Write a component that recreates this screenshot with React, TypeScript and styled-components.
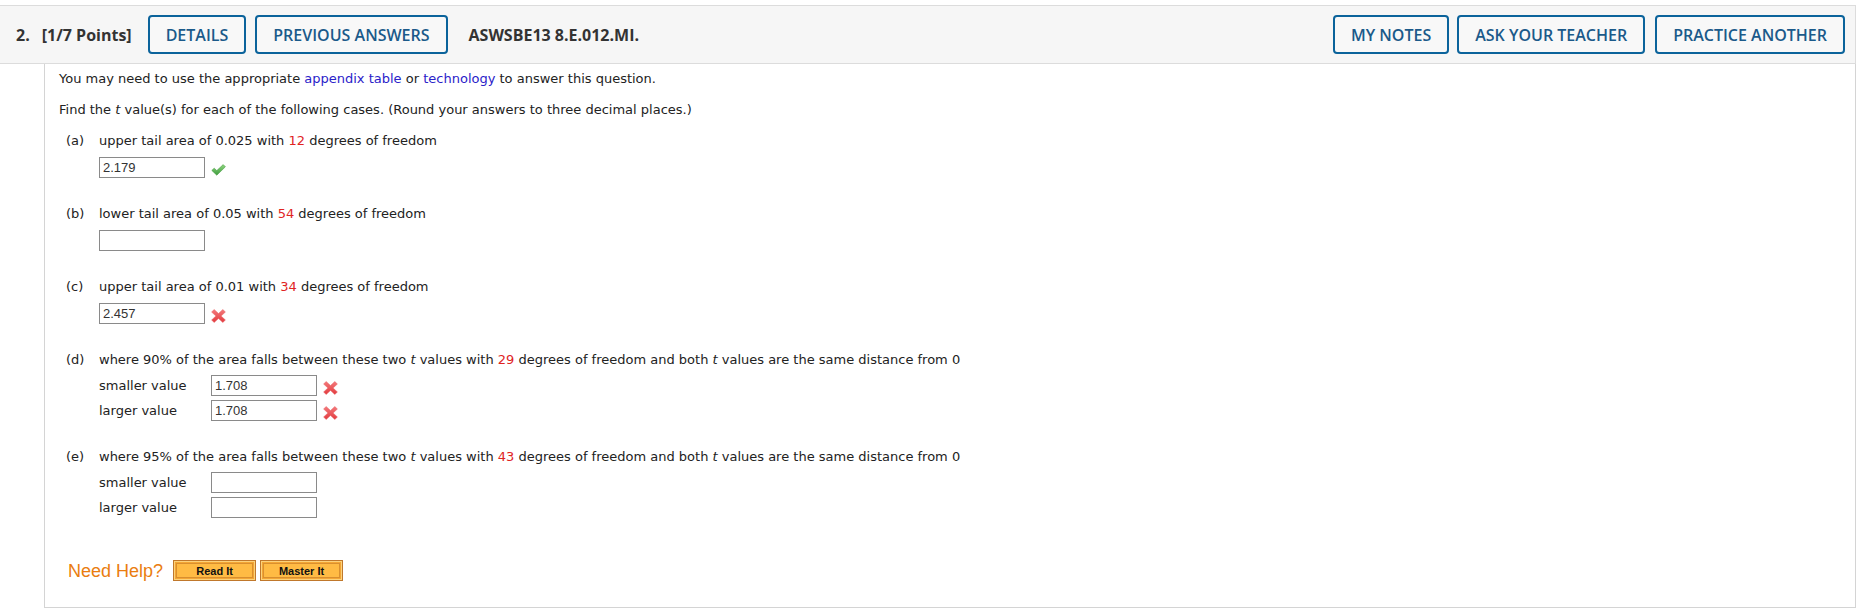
import React from "react";
import styled, { createGlobalStyle } from "styled-components";

const GlobalStyle = createGlobalStyle`
  html, body {
    margin: 0;
    padding: 0;
    background: #ffffff;
  }
`;

const Page = styled.div`
  padding-top: 5px;
  width: 1856px;
  box-sizing: border-box;
`;

const Header = styled.div`
  display: flex;
  align-items: center;
  height: 59px;
  box-sizing: border-box;
  background: #f6f6f6;
  border-top: 1px solid #dcdcdc;
  border-bottom: 1px solid #dcdcdc;
  border-right: 1px solid #dcdcdc;
  padding: 0 10px 0 16px;
  font-family: "Open Sans", "DejaVu Sans", sans-serif;
  color: #333333;
`;

const QNumber = styled.span`
  font-size: 16px;
  font-weight: 700;
  margin-right: 12px;
`;

const Points = styled.span`
  font-size: 16px;
  font-weight: 700;
  margin-right: 16px;
`;

const HeaderButton = styled.button<{ $gap?: number }>`
  height: 39px;
  box-sizing: border-box;
  border: 2px solid #0b639b;
  border-radius: 4px;
  background: #f8f8f8;
  padding: 0 16px;
  margin-right: ${(p) => (p.$gap ?? 9)}px;
  color: #1b5a8a;
  font-family: "Open Sans", "DejaVu Sans", sans-serif;
  font-size: 16px;
  font-weight: 600;
  text-transform: uppercase;
  white-space: nowrap;
  cursor: pointer;
`;

const Code = styled.span`
  font-size: 16px;
  font-weight: 700;
  margin-left: 12px;
`;

const Spacer = styled.div`
  flex: 1;
`;

const Body = styled.div`
  margin-left: 44px;
  border-left: 1px solid #d4d4d4;
  border-right: 1px solid #d4d4d4;
  border-bottom: 1px solid #d4d4d4;
  padding: 7px 0 26px 14px;
  font-family: Verdana, "DejaVu Sans", sans-serif;
  font-size: 13px;
  line-height: 16px;
  color: #222222;
`;

const Para = styled.p`
  margin: 0 0 15px 0;
`;

const Link = styled.a`
  color: #2a22c9;
  text-decoration: none;
`;

const Red = styled.span`
  color: #e0241f;
`;

const Part = styled.div<{ $bottom: number }>`
  display: grid;
  grid-template-columns: 33px auto;
  padding-left: 7px;
  margin-bottom: ${(p) => p.$bottom}px;
`;

const PartLetter = styled.span``;

const PartBody = styled.div`
  display: flex;
  flex-direction: column;
`;

const Answers = styled.div<{ $multi: boolean }>`
  display: flex;
  flex-direction: column;
  gap: 4px;
  margin-top: ${(p) => (p.$multi ? 7 : 8)}px;
`;

const AnswerRow = styled.div`
  display: flex;
  align-items: center;
  height: 21px;
`;

const RowLabel = styled.span`
  width: 112px;
`;

const Field = styled.input`
  width: 106px;
  height: 21px;
  box-sizing: border-box;
  border: 1px solid #8a8a8a;
  border-radius: 0;
  padding: 0 3px;
  margin: 0;
  font-family: Arial, "Liberation Sans", sans-serif;
  font-size: 13px;
  color: #333333;
  background: #ffffff;
`;

const Mark = styled.span`
  display: inline-flex;
  margin-left: 6px;
  margin-top: 4px;
`;

const HelpRow = styled.div`
  display: flex;
  align-items: center;
  margin-top: 42px;
  padding-left: 9px;
`;

const HelpText = styled.span`
  font-family: Arial, "Liberation Sans", sans-serif;
  font-size: 18px;
  color: #ea7d10;
  margin-right: 10px;
`;

const HelpButton = styled.button`
  width: 83px;
  height: 21px;
  box-sizing: border-box;
  margin-right: 4px;
  padding: 0;
  border: 1px solid #c0782c;
  background: #ffbb44;
  box-shadow: inset 0 0 0 1px #fcd27a, inset 0 0 0 2px #f3a534, inset 0 0 0 3px #d98f2f;
  font-family: Arial, "Liberation Sans", sans-serif;
  font-size: 11px;
  font-weight: 700;
  color: #111111;
  cursor: pointer;
`;

const Check = () => (
  <svg width="15" height="12" viewBox="0 0 15 12">
    <defs>
      <linearGradient id="ck" x1="0" y1="0" x2="0" y2="1">
        <stop offset="0" stopColor="#8fd67f" />
        <stop offset="1" stopColor="#3e9c3e" />
      </linearGradient>
    </defs>
    <path
      d="M0.8 6.4 L3.2 4.2 L5.8 6.6 L12.2 0.6 L14.4 2.8 L5.8 11.2 Z"
      fill="url(#ck)"
      stroke="#4a9f45"
      strokeWidth="0.6"
      strokeLinejoin="round"
    />
  </svg>
);

const Cross = () => (
  <svg width="15" height="14" viewBox="0 0 15 14">
    <defs>
      <linearGradient id="cr" x1="0" y1="0" x2="0" y2="1">
        <stop offset="0" stopColor="#f47a7c" />
        <stop offset="1" stopColor="#e23a3e" />
      </linearGradient>
    </defs>
    <path
      d="M0.6 3 L3.2 0.5 L7.5 4.6 L11.8 0.5 L14.4 3 L10.1 7 L14.4 11 L11.8 13.5 L7.5 9.4 L3.2 13.5 L0.6 11 L4.9 7 Z"
      fill="url(#cr)"
      stroke="#e86567"
      strokeWidth="0.5"
      strokeLinejoin="round"
    />
  </svg>
);

type Answer = { label?: string; value: string; mark?: "ok" | "bad" };

const TOKEN = /(\{[^}]+\}|\*[^*]+\*)/;

function renderText(text: string) {
  return text.split(TOKEN).map((chunk, i) => {
    if (chunk.startsWith("{")) return <Red key={i}>{chunk.slice(1, -1)}</Red>;
    if (chunk.startsWith("*")) return <i key={i}>{chunk.slice(1, -1)}</i>;
    return <React.Fragment key={i}>{chunk}</React.Fragment>;
  });
}

const parts: { letter: string; text: string; answers: Answer[] }[] = [
  {
    letter: "(a)",
    text: "upper tail area of 0.025 with {12} degrees of freedom",
    answers: [{ value: "2.179", mark: "ok" }],
  },
  {
    letter: "(b)",
    text: "lower tail area of 0.05 with {54} degrees of freedom",
    answers: [{ value: "" }],
  },
  {
    letter: "(c)",
    text: "upper tail area of 0.01 with {34} degrees of freedom",
    answers: [{ value: "2.457", mark: "bad" }],
  },
  {
    letter: "(d)",
    text: "where 90% of the area falls between these two *t* values with {29} degrees of freedom and both *t* values are the same distance from 0",
    answers: [
      { label: "smaller value", value: "1.708", mark: "bad" },
      { label: "larger value", value: "1.708", mark: "bad" },
    ],
  },
  {
    letter: "(e)",
    text: "where 95% of the area falls between these two *t* values with {43} degrees of freedom and both *t* values are the same distance from 0",
    answers: [
      { label: "smaller value", value: "" },
      { label: "larger value", value: "" },
    ],
  },
];

export default function App() {
  return (
    <Page>
      <GlobalStyle />
      <Header>
        <QNumber>2.</QNumber>
        <Points>[1/7 Points]</Points>
        <HeaderButton>Details</HeaderButton>
        <HeaderButton>Previous Answers</HeaderButton>
        <Code>ASWSBE13 8.E.012.MI.</Code>
        <Spacer />
        <HeaderButton $gap={8}>My Notes</HeaderButton>
        <HeaderButton $gap={10}>Ask Your Teacher</HeaderButton>
        <HeaderButton $gap={0}>Practice Another</HeaderButton>
      </Header>
      <Body>
        <Para>
          You may need to use the appropriate <Link href="#">appendix table</Link> or{" "}
          <Link href="#">technology</Link> to answer this question.
        </Para>
        <Para>
          Find the <i>t</i> value(s) for each of the following cases. (Round your answers to three
          decimal places.)
        </Para>
        {parts.map((part, idx) => {
          const multi = part.answers.length > 1;
          return (
            <Part key={part.letter} $bottom={idx === parts.length - 1 ? 0 : 28}>
              <PartLetter>{part.letter}</PartLetter>
              <PartBody>
                <span>{renderText(part.text)}</span>
                <Answers $multi={multi}>
                  {part.answers.map((a, j) => (
                    <AnswerRow key={j}>
                      {a.label && <RowLabel>{a.label}</RowLabel>}
                      <Field defaultValue={a.value} />
                      {a.mark === "ok" && (
                        <Mark>
                          <Check />
                        </Mark>
                      )}
                      {a.mark === "bad" && (
                        <Mark>
                          <Cross />
                        </Mark>
                      )}
                    </AnswerRow>
                  ))}
                </Answers>
              </PartBody>
            </Part>
          );
        })}
        <HelpRow>
          <HelpText>Need Help?</HelpText>
          <HelpButton>Read It</HelpButton>
          <HelpButton>Master It</HelpButton>
        </HelpRow>
      </Body>
    </Page>
  );
}
